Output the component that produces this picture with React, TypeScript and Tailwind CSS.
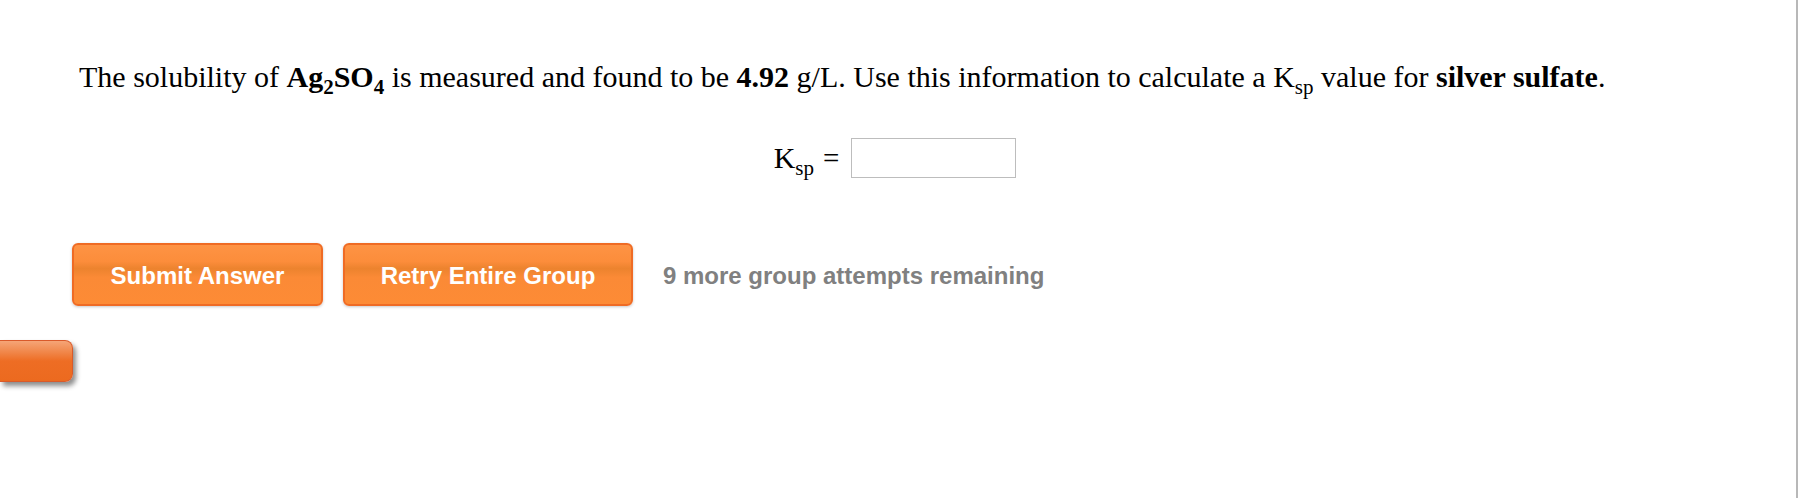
export default function App() {
  const serif = { fontFamily: '"Liberation Serif", "Times New Roman", serif' };
  const sans = { fontFamily: '"Liberation Sans", Arial, sans-serif' };

  const btn =
    'h-[63px] rounded-[6px] border-2 border-[#ef6b24] bg-[linear-gradient(to_bottom,#fe9344_0%,#fc8d3b_28%,#ec832e_40%,#fb8a36_55%,#fd8b35_100%)] text-white font-bold text-[24px] leading-[30px] pt-[2px] shadow-[0_1px_3px_rgba(0,0,0,0.22)]';

  return (
    <div className="min-h-screen w-full bg-white border-r-2 border-[#b8b8b8]">
      {/* Question text */}
      <p
        className="pt-[59px] pl-[79px] text-[30px] leading-[35px] text-black"
        style={serif}
      >
        The solubility of{' '}
        <b>
          Ag<span className="text-[21px] leading-[0] align-[-7px]">2</span>SO
          <span className="text-[21px] leading-[0] align-[-7px]">4</span>
        </b>{' '}
        is measured and found to be <b>4.92</b> g/L. Use this information to calculate a K
        <span className="text-[21px] leading-[0] align-[-7px]">sp</span> value for{' '}
        <b>silver sulfate</b>.
      </p>

      {/* Ksp input row */}
      <div className="mt-[44px] flex items-center justify-center pr-[6px]" style={serif}>
        <span className="text-[30px] leading-[40px] text-black">
          K<span className="text-[21px] leading-[0] align-[-7px]">sp</span>
        </span>
        <span className="ml-[9px] text-[29px] leading-[40px] text-black">=</span>
        <input
          type="text"
          className="ml-[12px] h-[40px] w-[165px] border border-[#bdbdbd] bg-white outline-none"
        />
      </div>

      {/* Actions */}
      <div className="mt-[65px] pl-[72px] flex items-center" style={sans}>
        <button className={`${btn} w-[251px]`}>Submit Answer</button>
        <button className={`${btn} ml-[20px] w-[290px]`}>Retry Entire Group</button>
        <span className="ml-[30px] pt-[3px] text-[24px] font-bold text-[#808080]">
          9 more group attempts remaining
        </span>
      </div>

      {/* Side tab */}
      <div className="mt-[34px] h-[42px] w-[73px] rounded-r-[8px] border border-l-0 border-[#d95a2a] bg-[linear-gradient(to_bottom,#f5a577_0%,#f08446_30%,#ee6d24_50%,#ec6a1f_100%)] shadow-[3px_4px_5px_rgba(0,0,0,0.45)]" />
    </div>
  );
}
